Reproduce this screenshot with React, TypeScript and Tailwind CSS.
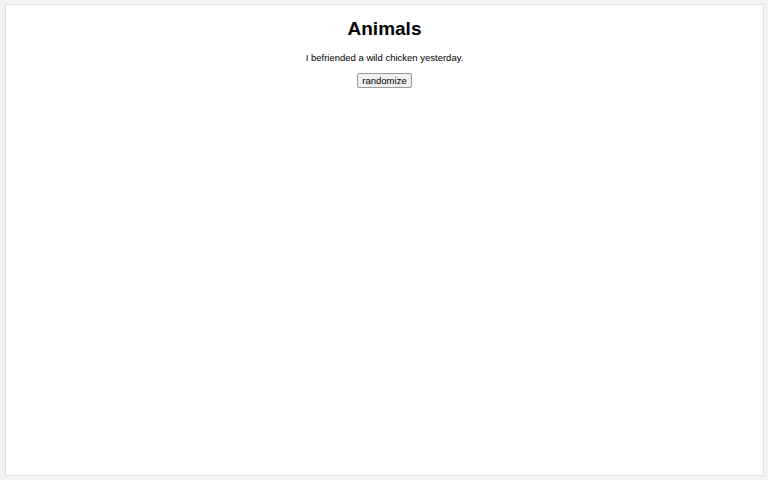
export default function App() {
  return (
    <div className="h-[480px] w-[768px] bg-[#f3f3f3] pt-1 pl-[5px] pr-[4px] pb-[4px] font-['Liberation_Sans',Arial,sans-serif]">
      <div className="h-[472px] border border-[#dedede] bg-white flex flex-col items-center">
        <h1 className="mt-[13px] text-[19px] leading-[22px] font-bold text-black">Animals</h1>
        <p className="mt-[12px] text-[9.5px] leading-[12px] text-black">I befriended a wild chicken yesterday.</p>
        <button className="mt-[9px] h-[15px] w-[55px] text-[9.5px] leading-[11px] text-black bg-[#f0f0f0] border border-[#9a9a9a] rounded-[2px]">
          randomize
        </button>
      </div>
    </div>
  )
}
